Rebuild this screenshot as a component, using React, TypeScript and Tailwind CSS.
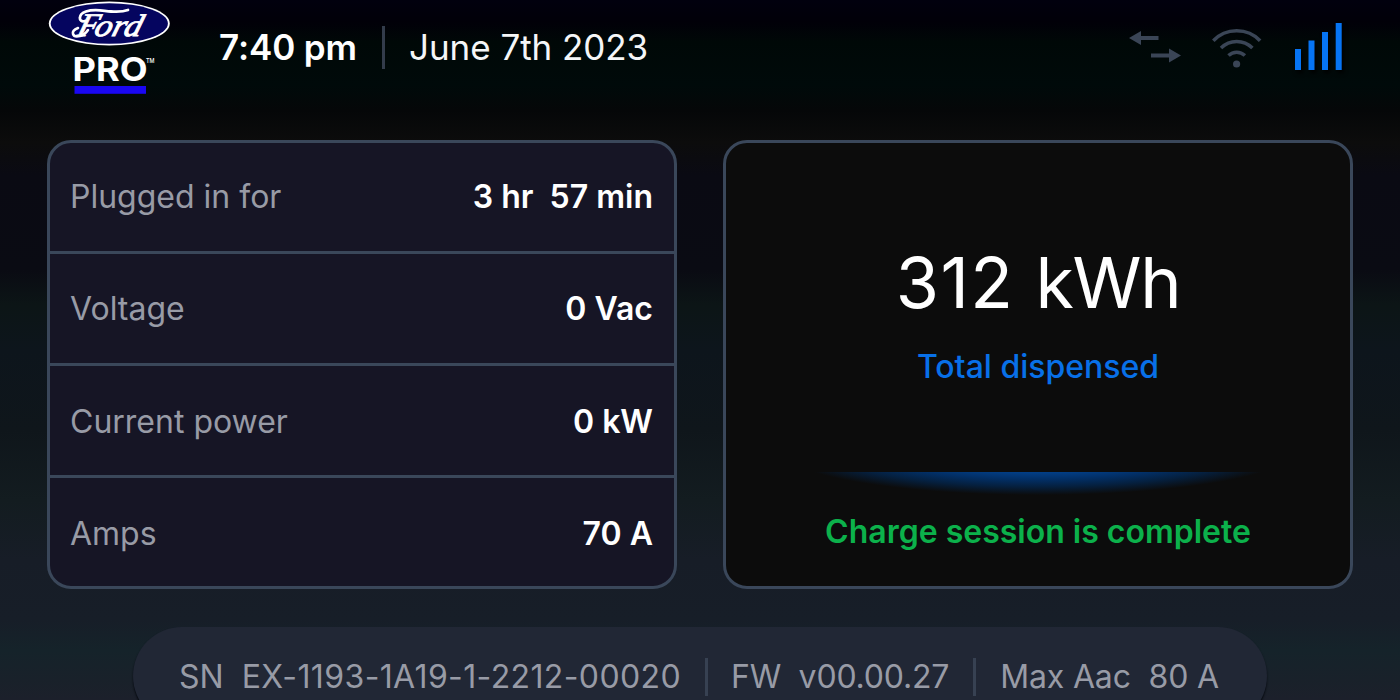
type Reading = { label: string; value: string; rowClass: string };

const readings: Reading[] = [
  { label: "Plugged in for", value: "3 hr  57 min", rowClass: "h-[111px] border-b-3" },
  { label: "Voltage", value: "0 Vac", rowClass: "h-[112px] border-b-3" },
  { label: "Current power", value: "0 kW", rowClass: "h-[112px] border-b-3 pt-0.5" },
  { label: "Amps", value: "70 A", rowClass: "h-[108px] pt-[3px]" },
];

const FordLogo = () => (
  <svg width="124" height="100" viewBox="0 0 124 100" className="block">
    <ellipse cx="62.3" cy="23.5" rx="60.5" ry="22" fill="#fff" />
    <ellipse cx="62.3" cy="23.5" rx="58.6" ry="20.2" fill="#05055f" />
    {/* Wordmark, with the swash that crowns the F */}
    <g fill="#fff" stroke="#fff" fontFamily="Liberation Serif, serif" fontStyle="italic">
      <text transform="translate(29 36) skewX(-16)" fontSize="33" strokeWidth="0.9">
        <tspan>F</tspan>
        <tspan x="17" y="0" fontSize="31" textLength="47" lengthAdjust="spacingAndGlyphs">
          ord
        </tspan>
      </text>
      <path d="M38 21C31 23 31 14 39 11.5C48 8.5 56 11 64 11.5C71 12 77 11.5 81 10" fill="none" strokeWidth="2.8" strokeLinecap="round" />
      <path d="M31 28C23 31 25 38 33 36C37 35 39 33 41 30" fill="none" strokeWidth="2.6" strokeLinecap="round" />
    </g>
    <text x="25.5" y="81" fill="#fff" fontFamily="Inter, sans-serif" fontWeight="700" fontSize="32" textLength="75" lengthAdjust="spacingAndGlyphs">
      PRO
    </text>
    <text x="98.9" y="63" fill="#fff" fontFamily="Inter, sans-serif" fontWeight="500" fontSize="6.5" textLength="8.5" lengthAdjust="spacingAndGlyphs">
      TM
    </text>
    <rect x="27.5" y="86" width="71.5" height="7.8" fill="#1a07f2" />
  </svg>
);

const TransferIcon = () => (
  <svg width="54" height="36" viewBox="0 0 54 36" fill="#3a4556">
    <path d="M0 9.9L12 3V8h17.5v4H12V17Z" />
    <path d="M52 27.4L40 20.5v5H22v4h18V34.5Z" />
  </svg>
);

const WifiIcon = () => (
  <svg width="50" height="42" viewBox="0 0 50 42" fill="none" stroke="#3a4556" strokeWidth="3.5">
    <path d="M1.3 13.8C13.7 0.4 35.7 0.4 48.1 13.8" />
    <path d="M9 21C17.7 12.3 31.7 12.3 40.4 21" />
    <path d="M16.5 28.6C21.2 24 28.2 24 32.9 28.6" />
    <circle cx="24.6" cy="37" r="3.6" fill="#3a4556" stroke="none" />
  </svg>
);

const SignalIcon = () => (
  <svg width="48" height="48" viewBox="0 0 48 48" fill="#0674f4" className="drop-shadow-[2px_3px_2px_#000]">
    <rect x="0" y="26" width="6" height="21" />
    <rect x="13.5" y="17.5" width="6" height="29.5" />
    <rect x="27" y="9" width="6" height="38" />
    <rect x="40.7" y="0" width="6" height="47" />
  </svg>
);

const App = () => {
  return (
    <main className="h-[700px] w-[1400px] overflow-hidden bg-[linear-gradient(180deg,#01000e_0px,#010008_22px,#000807_42px,#000a0a_85px,#050708_110px,#0c0c0c_142px,#0a0a13_175px,#0a0b13_270px,#0c1516_305px,#0d151c_350px,#0f161b_430px,#131c20_500px,#171d27_560px,#171e28_620px,#15232a_650px,#19212a_680px,#1c202b_700px)] font-['Inter',sans-serif]">
      {/* Top bar */}
      <header className="flex h-[140px] items-start pl-[47px] pr-[57px]">
        <FordLogo />
        <div className="ml-[48px] mt-[23px] flex h-[48px] items-center whitespace-pre">
          <span className="text-[35px] font-semibold tracking-[-0.1px] text-white">7:40 pm</span>
          <span className="ml-[25px] mr-[24px] h-[43px] w-[3px] bg-[#333c4b]" />
          <span className="text-[35px] tracking-[-0.05px] text-[#f5f6f7]">June 7th 2023</span>
        </div>
        <div className="ml-auto flex items-start">
          <div className="mt-[28px]">
            <TransferIcon />
          </div>
          <div className="ml-[29px] mt-[27px]">
            <WifiIcon />
          </div>
          <div className="ml-[33px] mt-[23px]">
            <SignalIcon />
          </div>
        </div>
      </header>

      <div className="flex gap-[46px] px-[47px]">
        {/* Session readings */}
        <section className="flex h-[449px] w-[630px] flex-col rounded-[24px] border-3 border-[#3a475a] bg-[#161525]">
          {readings.map((r) => (
            <div
              key={r.label}
              className={`flex items-center justify-between whitespace-pre border-[#3a475a] pl-[20px] pr-[21px] text-[32px] ${r.rowClass}`}
            >
              <span className="text-[#989ba6]">{r.label}</span>
              <span className="font-semibold text-white">{r.value}</span>
            </div>
          ))}
        </section>

        {/* Energy total */}
        <section className="flex h-[449px] w-[630px] flex-col items-center whitespace-pre rounded-[24px] border-3 border-[#3a475a] bg-[#0c0c0c]">
          <p className="mt-[96px] text-[70px] leading-[88px] text-white">
            <span className="tracking-[1.4px]">312 </span>
            <span className="tracking-[-1.4px]">kWh</span>
          </p>
          <p className="mt-[20px] text-[32px] font-medium leading-[40px] text-[#0870e8]">Total dispensed</p>
          <div className="mt-[85px] h-[24px] w-[460px] bg-[radial-gradient(ellipse_260px_46px_at_50%_-23px,#023f88_50%,#022f66_66%,#05203f_82%,#0c0c0c_100%)]" />
          <p className="mt-[16px] text-[32px] font-semibold leading-[40px] text-[#0cb14b]">Charge session is complete</p>
        </section>
      </div>

      {/* Device info */}
      <footer className="mx-auto mt-[38px] flex h-[98px] w-[1134px] items-center whitespace-pre rounded-full bg-[#212735] pl-[46px] pt-[2px] text-[32px] text-[#989ba6] shadow-[0_2px_2px_#05090f]">
        <span>SN  <span className="tracking-[0.38px]">EX-1193-1A19-1-2212-00020</span></span>
        <span className="ml-[24px] mr-[23px] h-[38px] w-[3px] bg-[#374152]" />
        <span className="tracking-[-0.2px]">FW  v00.00.27</span>
        <span className="ml-[24px] mr-[24px] h-[38px] w-[3px] bg-[#374152]" />
        <span className="tracking-[-0.15px]">Max Aac  80 A</span>
      </footer>
    </main>
  );
};

export default App;
